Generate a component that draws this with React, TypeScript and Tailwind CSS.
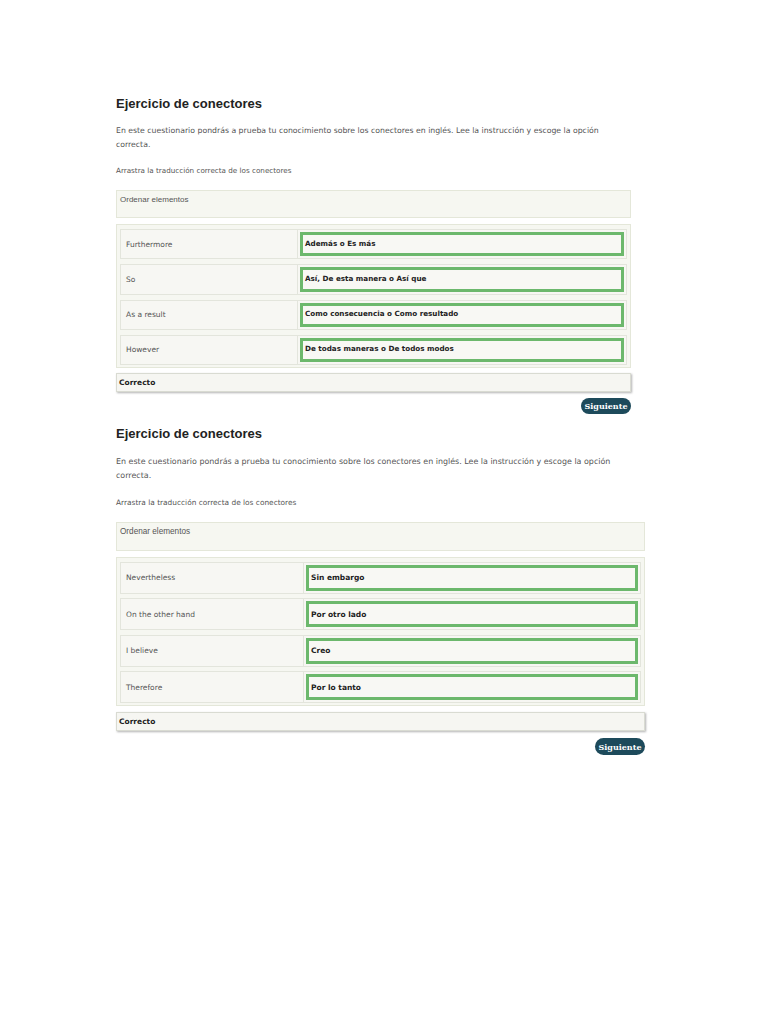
import React from "react";

type Pair = { en: string; es: string };

type Variant = {
  width: string;
  title: string;
  para: string;
  hint: string;
  order: string;
  rows: string;
  row: string;
  left: string;
  answer: string;
  correct: string;
  next: string;
};

const first: Pair[] = [
  { en: "Furthermore", es: "Además o Es más" },
  { en: "So", es: "Así, De esta manera o Así que" },
  { en: "As a result", es: "Como consecuencia o Como resultado" },
  { en: "However", es: "De todas maneras o De todos modos" },
];

const second: Pair[] = [
  { en: "Nevertheless", es: "Sin embargo" },
  { en: "On the other hand", es: "Por otro lado" },
  { en: "I believe", es: "Creo" },
  { en: "Therefore", es: "Por lo tanto" },
];

// the second exercise is drawn a touch larger in the screenshot
const v1: Variant = {
  width: "w-[515px]",
  title: "mt-0",
  para: "mt-[11px] text-[7.75px]",
  hint: "mt-[13px] text-[7.2px]",
  order: "mt-[13px] h-[28px] text-[8px]",
  rows: "mt-[6px] pt-[4px] pb-[2px] gap-[5px]",
  row: "h-[30.25px]",
  left: "w-[177px]",
  answer: "text-[7.2px]",
  correct: "mt-[5px] h-[19px]",
  next: "mt-[6px] h-[16px] w-[50px]",
};

const v2: Variant = {
  width: "w-[529px]",
  title: "mt-[11px]",
  para: "mt-[12px] text-[7.95px]",
  hint: "mt-[14px] text-[7.4px]",
  order: "mt-[13px] h-[29px] text-[8.2px]",
  rows: "mt-[6px] pt-[4px] pb-[2px] gap-[4.4px]",
  row: "h-[32px]",
  left: "w-[183px]",
  answer: "text-[7.5px]",
  correct: "mt-[6px] h-[19px]",
  next: "mt-[7px] h-[17px] w-[50px]",
};

function Exercise({ pairs, v }: { pairs: Pair[]; v: Variant }) {
  return (
    <section className={`${v.width} text-[#444] font-['DejaVu_Sans',Verdana,sans-serif]`}>
      <h2 className={`${v.title} font-['Liberation_Sans',Arial,sans-serif] text-[13px] leading-[18px] font-bold text-[#222]`}>
        Ejercicio de conectores
      </h2>
      <p className={`${v.para} leading-[14px] text-[#555]`}>
        En este cuestionario pondrás a prueba tu conocimiento sobre los conectores en inglés. Lee la instrucción y escoge la opción correcta.
      </p>
      <p className={`${v.hint} leading-[12px] text-[#555]`}>Arrastra la traducción correcta de los conectores</p>

      {/* header box */}
      <div className={`${v.order} border border-[#e4e7d9] bg-[#f6f7f1] px-[3px] pt-[3px] font-['Liberation_Sans',Arial,sans-serif] leading-[12px] text-[#555]`}>
        Ordenar elementos
      </div>

      {/* drag rows */}
      <div className={`${v.rows} flex flex-col border border-[#e4e7d9] bg-[#f6f7f1] px-[3px]`}>
        {pairs.map((p) => (
          <div key={p.en} className={`${v.row} flex border border-[#e3e5dc] bg-[#f7f7f3]`}>
            <div className={`${v.left} flex items-center border-r border-[#e3e5dc] pl-[5px] text-[7.5px] text-[#555]`}>
              {p.en}
            </div>
            <div className="flex flex-1 p-[2px]">
              <div className={`${v.answer} flex flex-1 items-center border-[3px] border-[#6cb86c] bg-[#f8f8f4] pl-[2px] font-bold text-[#222]`}>
                {p.es}
              </div>
            </div>
          </div>
        ))}
      </div>

      <div className={`${v.correct} flex items-center border border-[#d9dbd2] bg-[#f6f6f2] pl-[2px] text-[7.5px] font-bold text-[#222] shadow-[1px_1px_2px_rgba(0,0,0,0.3)]`}>
        Correcto
      </div>
      <div className="flex justify-end">
        <button className={`${v.next} flex items-center justify-center rounded-full bg-[#1d4a5b] font-['DejaVu_Serif',Georgia,serif] text-[8px] font-bold text-white`}>
          Siguiente
        </button>
      </div>
    </section>
  );
}

export default function App() {
  return (
    <div className="min-h-[1024px] w-[768px] bg-white pl-[116px] pt-[95px]">
      <Exercise pairs={first} v={v1} />
      <Exercise pairs={second} v={v2} />
    </div>
  );
}
